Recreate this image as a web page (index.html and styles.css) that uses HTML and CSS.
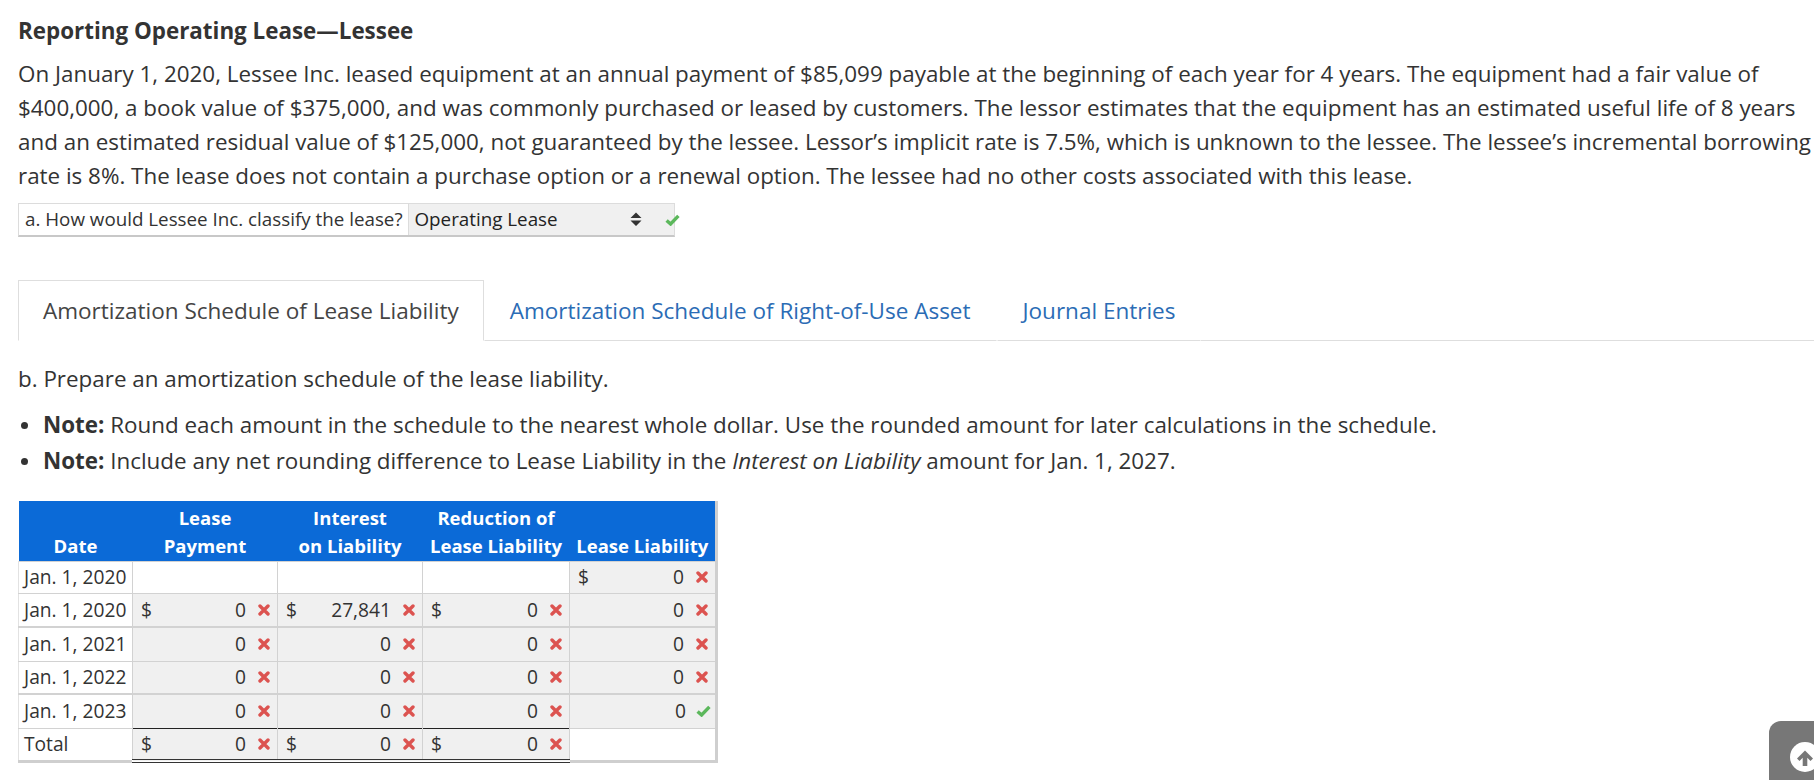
FILE: index.html
```html
<!DOCTYPE html>
<html lang="en">
<head>
<meta charset="utf-8">
<title>Reporting Operating Lease—Lessee</title>
<link rel="stylesheet" href="styles.css">
</head>
<body>
<div class="page">
  <h1 class="title">Reporting Operating Lease—Lessee</h1>
  <p class="intro">On January 1, 2020, Lessee Inc. leased equipment at an annual payment of $85,099 payable at the beginning of each year for 4 years. The equipment had a fair value of<br>$400,000, a book value of $375,000, and was commonly purchased or leased by customers. The lessor estimates that the equipment has an estimated useful life of 8 years<br>and an estimated residual value of $125,000, not guaranteed by the lessee. Lessor’s implicit rate is 7.5%, which is unknown to the lessee. The lessee’s incremental borrowing<br>rate is 8%. The lease does not contain a purchase option or a renewal option. The lessee had no other costs associated with this lease.</p>

  <div class="classify-row">
    <div class="classify">
      <span class="classify-label">a. How would Lessee Inc. classify the lease?</span>
      <span class="classify-select">
        <span class="sel-text">Operating Lease</span>
        <svg class="sort" viewBox="0 0 12 15" width="12" height="15"><path d="M6 0.5 L11.5 6 H0.5 Z M0.5 8.5 H11.5 L6 14 Z" fill="#333"/></svg>
      </span>
    </div>
    <svg class="ok ok-classify" viewBox="0 0 15 12" width="15" height="12"><path d="M1.6 6.4 L5.6 10 L13.4 1.8" fill="none" stroke="#5cb85c" stroke-width="3.4" stroke-linejoin="miter"/></svg>
  </div>

  <div class="tabs">
    <div class="tab active">Amortization Schedule of Lease Liability</div>
    <div class="tab">Amortization Schedule of Right-of-Use Asset</div>
    <div class="tab">Journal Entries</div>
    <div class="tab-fill"></div>
  </div>

  <p class="part">b. Prepare an amortization schedule of the lease liability.</p>
  <ul class="notes">
    <li><b>Note:</b> Round each amount in the schedule to the nearest whole dollar. Use the rounded amount for later calculations in the schedule.</li>
    <li><b>Note:</b> Include any net rounding difference to Lease Liability in the <i>Interest on Liability</i> amount for Jan. 1, 2027.</li>
  </ul>

  <table class="sched">
    <colgroup>
      <col class="c-date"><col class="c-a"><col class="c-a"><col class="c-b"><col class="c-b">
    </colgroup>
    <thead>
      <tr>
        <th>Date</th>
        <th>Lease<br>Payment</th>
        <th>Interest<br>on Liability</th>
        <th>Reduction of<br>Lease Liability</th>
        <th>Lease Liability</th>
      </tr>
    </thead>
    <tbody>
      <tr class="r1">
        <td class="date">Jan. 1, 2020</td>
        <td class="blank"></td>
        <td class="blank"></td>
        <td class="blank"></td>
        <td class="amt"><div class="val"><span class="cur">$</span><span class="num">0</span><svg class="bad" viewBox="0 0 12 12" width="12" height="12"><path d="M2 2 L10 10 M10 2 L2 10" stroke="#dc5350" stroke-width="3.4" stroke-linecap="round"/></svg></div></td>
      </tr>
      <tr class="r2 thick">
        <td class="date">Jan. 1, 2020</td>
        <td class="amt"><div class="val"><span class="cur">$</span><span class="num">0</span><svg class="bad" viewBox="0 0 12 12" width="12" height="12"><path d="M2 2 L10 10 M10 2 L2 10" stroke="#dc5350" stroke-width="3.4" stroke-linecap="round"/></svg></div></td>
        <td class="amt"><div class="val"><span class="cur">$</span><span class="num">27,841</span><svg class="bad" viewBox="0 0 12 12" width="12" height="12"><path d="M2 2 L10 10 M10 2 L2 10" stroke="#dc5350" stroke-width="3.4" stroke-linecap="round"/></svg></div></td>
        <td class="amt"><div class="val"><span class="cur">$</span><span class="num">0</span><svg class="bad" viewBox="0 0 12 12" width="12" height="12"><path d="M2 2 L10 10 M10 2 L2 10" stroke="#dc5350" stroke-width="3.4" stroke-linecap="round"/></svg></div></td>
        <td class="amt"><div class="val"><span class="num">0</span><svg class="bad" viewBox="0 0 12 12" width="12" height="12"><path d="M2 2 L10 10 M10 2 L2 10" stroke="#dc5350" stroke-width="3.4" stroke-linecap="round"/></svg></div></td>
      </tr>
      <tr class="r3">
        <td class="date">Jan. 1, 2021</td>
        <td class="amt"><div class="val"><span class="num">0</span><svg class="bad" viewBox="0 0 12 12" width="12" height="12"><path d="M2 2 L10 10 M10 2 L2 10" stroke="#dc5350" stroke-width="3.4" stroke-linecap="round"/></svg></div></td>
        <td class="amt"><div class="val"><span class="num">0</span><svg class="bad" viewBox="0 0 12 12" width="12" height="12"><path d="M2 2 L10 10 M10 2 L2 10" stroke="#dc5350" stroke-width="3.4" stroke-linecap="round"/></svg></div></td>
        <td class="amt"><div class="val"><span class="num">0</span><svg class="bad" viewBox="0 0 12 12" width="12" height="12"><path d="M2 2 L10 10 M10 2 L2 10" stroke="#dc5350" stroke-width="3.4" stroke-linecap="round"/></svg></div></td>
        <td class="amt"><div class="val"><span class="num">0</span><svg class="bad" viewBox="0 0 12 12" width="12" height="12"><path d="M2 2 L10 10 M10 2 L2 10" stroke="#dc5350" stroke-width="3.4" stroke-linecap="round"/></svg></div></td>
      </tr>
      <tr class="r4 thick">
        <td class="date">Jan. 1, 2022</td>
        <td class="amt"><div class="val"><span class="num">0</span><svg class="bad" viewBox="0 0 12 12" width="12" height="12"><path d="M2 2 L10 10 M10 2 L2 10" stroke="#dc5350" stroke-width="3.4" stroke-linecap="round"/></svg></div></td>
        <td class="amt"><div class="val"><span class="num">0</span><svg class="bad" viewBox="0 0 12 12" width="12" height="12"><path d="M2 2 L10 10 M10 2 L2 10" stroke="#dc5350" stroke-width="3.4" stroke-linecap="round"/></svg></div></td>
        <td class="amt"><div class="val"><span class="num">0</span><svg class="bad" viewBox="0 0 12 12" width="12" height="12"><path d="M2 2 L10 10 M10 2 L2 10" stroke="#dc5350" stroke-width="3.4" stroke-linecap="round"/></svg></div></td>
        <td class="amt"><div class="val"><span class="num">0</span><svg class="bad" viewBox="0 0 12 12" width="12" height="12"><path d="M2 2 L10 10 M10 2 L2 10" stroke="#dc5350" stroke-width="3.4" stroke-linecap="round"/></svg></div></td>
      </tr>
      <tr class="r5">
        <td class="date">Jan. 1, 2023</td>
        <td class="amt pre"><div class="val"><span class="num">0</span><svg class="bad" viewBox="0 0 12 12" width="12" height="12"><path d="M2 2 L10 10 M10 2 L2 10" stroke="#dc5350" stroke-width="3.4" stroke-linecap="round"/></svg></div></td>
        <td class="amt pre"><div class="val"><span class="num">0</span><svg class="bad" viewBox="0 0 12 12" width="12" height="12"><path d="M2 2 L10 10 M10 2 L2 10" stroke="#dc5350" stroke-width="3.4" stroke-linecap="round"/></svg></div></td>
        <td class="amt pre"><div class="val"><span class="num">0</span><svg class="bad" viewBox="0 0 12 12" width="12" height="12"><path d="M2 2 L10 10 M10 2 L2 10" stroke="#dc5350" stroke-width="3.4" stroke-linecap="round"/></svg></div></td>
        <td class="amt"><div class="val"><span class="num">0</span><svg class="ok" viewBox="0 0 15 12" width="15" height="12"><path d="M1.6 6.4 L5.6 10 L13.4 1.8" fill="none" stroke="#5cb85c" stroke-width="3.4"/></svg></div></td>
      </tr>
      <tr class="total">
        <td class="date">Total</td>
        <td class="amt tot"><div class="val"><span class="cur">$</span><span class="num">0</span><svg class="bad" viewBox="0 0 12 12" width="12" height="12"><path d="M2 2 L10 10 M10 2 L2 10" stroke="#dc5350" stroke-width="3.4" stroke-linecap="round"/></svg></div></td>
        <td class="amt tot"><div class="val"><span class="cur">$</span><span class="num">0</span><svg class="bad" viewBox="0 0 12 12" width="12" height="12"><path d="M2 2 L10 10 M10 2 L2 10" stroke="#dc5350" stroke-width="3.4" stroke-linecap="round"/></svg></div></td>
        <td class="amt tot"><div class="val"><span class="cur">$</span><span class="num">0</span><svg class="bad" viewBox="0 0 12 12" width="12" height="12"><path d="M2 2 L10 10 M10 2 L2 10" stroke="#dc5350" stroke-width="3.4" stroke-linecap="round"/></svg></div></td>
        <td class="blank"></td>
      </tr>
    </tbody>
  </table>
</div>

<div class="to-top">
  <span class="to-top-circle">
    <svg viewBox="0 0 30 30" width="30" height="30"><path d="M15 8.5 L23 16.5 L20.5 19 L17.3 15.8 V24 H12.7 V15.8 L9.5 19 L7 16.5 Z" fill="#777"/></svg>
  </span>
</div>
</body>
</html>
```
FILE: styles.css
```css
* {
  box-sizing: border-box;
}

html,
body {
  margin: 0;
  overflow: hidden;
}

body {
  font-family: "Open Sans", "Noto Sans", sans-serif;
  color: #333;
  background: #fff;
}

.page {
  padding: 17px 0 0 18px;
}

.title {
  margin: 0;
  font-size: 22.4px;
  line-height: 27px;
  font-weight: 700;
}

.intro {
  margin: 13px 0 0;
  font-size: 22.4px;
  line-height: 34px;
  white-space: nowrap;
}

/* part a: classification */
.classify-row {
  display: flex;
  align-items: center;
  margin-top: 10px;
}

.classify {
  display: flex;
  align-items: stretch;
  height: 34px;
  border: 1px solid #dcdcdc;
  border-bottom: 2px solid #c8c8c8;
  font-size: 18.8px;
  line-height: 31px;
}

.classify-label {
  padding: 0 5px 0 6px;
  white-space: nowrap;
}

.classify-select {
  display: flex;
  align-items: center;
  width: 266px;
  padding-left: 6px;
  background: #f0f0f0;
  border-left: 1px solid #dcdcdc;
  color: #222;
}

.sort {
  margin-left: auto;
  margin-right: 32px;
}

.ok-classify {
  position: relative;
  margin-left: -10px;
}

/* tabs */
.tabs {
  display: flex;
  margin-top: 43px;
}

.tab {
  height: 61px;
  padding: 0 25px;
  border: 1px solid transparent;
  border-bottom-color: #dedede;
  font-size: 22.5px;
  line-height: 59px;
  color: #2b6cb5;
  white-space: nowrap;
}

.tab.active {
  padding: 0 24px;
  border-color: #dedede;
  border-bottom-color: #fff;
  color: #444;
}

.tab-fill {
  flex: 1;
  border-bottom: 1px solid #dedede;
}

/* part b */
.part {
  margin: 21px 0 0;
  font-size: 22.4px;
  line-height: 34px;
}

.notes {
  margin: 11px 0 0;
  padding: 0;
  list-style: none;
  font-size: 22.4px;
  line-height: 36px;
}

.notes li::before {
  content: "";
  display: inline-block;
  width: 7px;
  height: 7px;
  margin: 0 15px 0 3px;
  border-radius: 50%;
  background: #333;
  vertical-align: 4px;
}

/* schedule table */
.sched {
  margin-top: 22px;
  border-collapse: collapse;
  table-layout: fixed;
  width: 699px;
  font-size: 19.2px;
  line-height: 20px;
  border-right: 3px solid #cfcfcf;
  border-bottom: 3px solid #cfcfcf;
}

.c-date { width: 114px; }
.c-a { width: 145px; }
.c-b { width: 147px; }

.sched th {
  height: 60px;
  padding: 0 2px 1px;
  background: #0b6ad7;
  color: #fff;
  font-size: 18.5px;
  font-weight: 700;
  line-height: 28px;
  vertical-align: bottom;
  text-align: center;
  white-space: nowrap;
}

.sched td {
  height: 33px;
  padding: 0 7px 0 8px;
  border: 1px solid #d2d2d2;
  background: #f0f0f0;
  vertical-align: middle;
}

.sched tr.r1 td { height: 32px; }
.sched tr.r2 td,
.sched tr.r3 td,
.sched tr.r5 td { height: 34px; }

.sched tr.thick td {
  border-bottom-width: 2px;
}

.sched td.date {
  padding-left: 5px;
  background: #fff;
  border-left: 1px solid #e2e2e2;
  white-space: nowrap;
}

.sched td.blank {
  background: #fff;
}

.sched td.pre {
  border-bottom-style: none;
}

.sched td.tot {
  border-top: 1px solid #222;
  border-bottom: 4px double #333;
}

.val {
  display: flex;
  align-items: center;
}

.num {
  margin-left: auto;
}

.bad {
  margin-left: 12px;
  flex: none;
}

.val .ok {
  margin-left: 10px;
  margin-right: -3px;
  flex: none;
}

/* scroll to top button */
.to-top {
  position: fixed;
  left: 1769px;
  top: 721px;
  width: 60px;
  height: 80px;
  background: #777;
  border-radius: 12px 0 0 0;
}

.to-top-circle {
  display: block;
  width: 30px;
  height: 30px;
  margin: 21px 0 0 21px;
  border-radius: 50%;
  background: #fff;
}

.to-top-circle svg {
  display: block;
}
```
